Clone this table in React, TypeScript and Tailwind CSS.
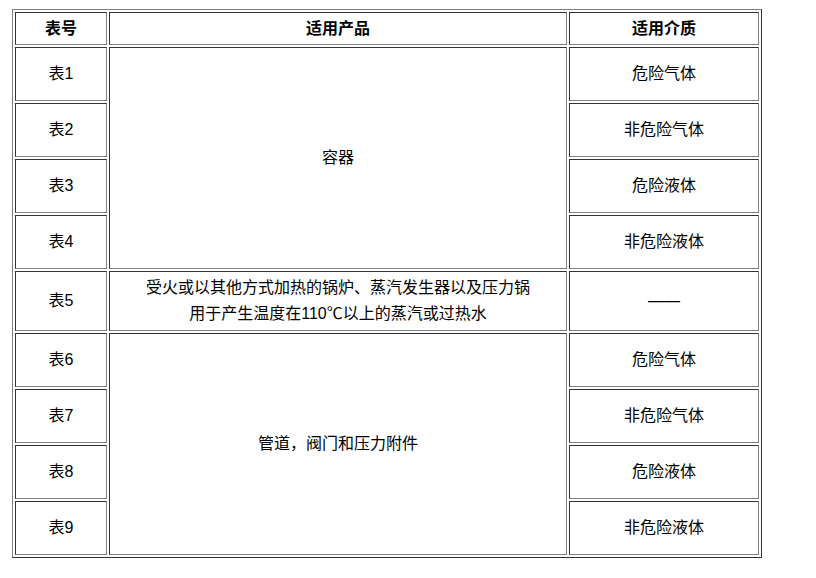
const cell =
  "border border-t-[#333] border-l-[#333] border-r-[#808080] border-b-[#808080] text-center align-middle p-0";

const groups = [
  { label: "容器", rows: ["表1", "表2", "表3", "表4"], media: ["危险气体", "非危险气体", "危险液体", "非危险液体"] },
  {
    label: "管道，阀门和压力附件",
    rows: ["表6", "表7", "表8", "表9"],
    media: ["危险气体", "非危险气体", "危险液体", "非危险液体"],
  },
];

function Group({ label, rows, media }: { label: string; rows: string[]; media: string[] }) {
  return (
    <>
      {rows.map((r, i) => (
        <tr key={r}>
          <td className={`${cell} h-[54px]`}>{r}</td>
          {i === 0 ? (
            <td className={cell} rowSpan={rows.length}>
              {label}
            </td>
          ) : null}
          <td className={cell}>{media[i]}</td>
        </tr>
      ))}
    </>
  );
}

export default function App() {
  return (
    <div
      className="min-h-screen bg-white pl-[12px] pt-[9px] text-[16px] text-black"
      style={{ fontFamily: '"Liberation Sans", "Noto Sans CJK SC", sans-serif' }}
    >
      <table className="w-[750px] table-fixed border-separate border-spacing-[2px] border border-t-[#808080] border-l-[#808080] border-r-[#333] border-b-[#333]">
        <colgroup>
          <col className="w-[92px]" />
          <col className="w-[458px]" />
          <col className="w-[190px]" />
        </colgroup>
        <thead>
          <tr>
            <th className={`${cell} h-[33px] font-bold`}>表号</th>
            <th className={`${cell} font-bold`}>适用产品</th>
            <th className={`${cell} font-bold`}>适用介质</th>
          </tr>
        </thead>
        <tbody>
          <Group {...groups[0]} />
          <tr>
            <td className={`${cell} h-[60px]`}>表5</td>
            <td className={`${cell} leading-[26px]`}>
              受火或以其他方式加热的锅炉、蒸汽发生器以及压力锅
              <br />
              用于产生温度在110℃以上的蒸汽或过热水
            </td>
            <td className={cell}>——</td>
          </tr>
          <Group {...groups[1]} />
        </tbody>
      </table>
    </div>
  );
}
